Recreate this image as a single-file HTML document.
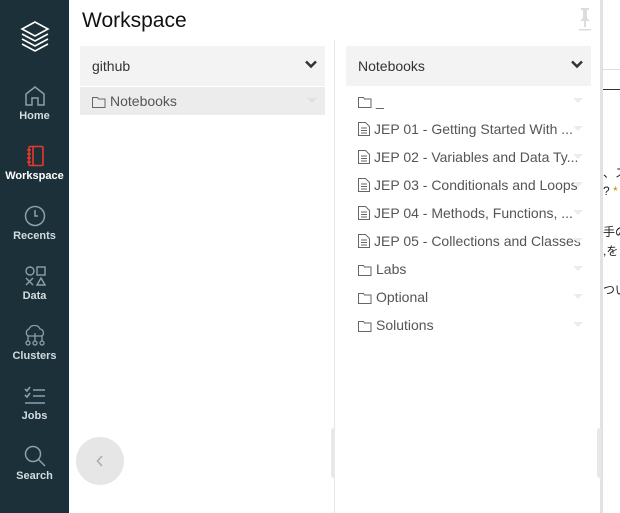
<!DOCTYPE html>
<html><head><meta charset="utf-8"><style>
*{margin:0;padding:0;box-sizing:border-box}
body{width:620px;height:513px;overflow:hidden;background:#fff;font-family:"Liberation Sans","Noto Sans CJK JP",sans-serif;position:relative}
.sb{position:absolute;left:0;top:0;width:69px;height:513px;background:#1c3039}
.it{position:absolute;left:0;width:69px;text-align:center;font-size:11px;font-weight:bold;color:#d2dbe0}
.it svg{display:block;margin:0 auto}
.abs{position:absolute}
.hdr{position:absolute;top:46px;height:40px;background:#f3f3f3;font-size:14px;color:#333;padding:12px 0 0 12px}
.row{position:absolute;height:28px;font-size:14px;color:#555;padding-left:12px;line-height:28px;white-space:nowrap}
.row svg{vertical-align:-2px;margin-right:4px}
.caret{position:absolute;right:8px;top:11px;width:0;height:0;border-left:5px solid transparent;border-right:5px solid transparent;border-top:5px solid #ececec}
.chev{position:absolute;right:8px;top:14px}
.jp{position:absolute;left:603px;font-size:12px;color:#222;white-space:nowrap}
</style></head><body>
<div class="jp" style="top:164px">、ス</div>
<div class="jp" style="top:184px">? <span style="color:#c80">*</span></div>
<div class="jp" style="top:223px">手の</div>
<div class="jp" style="top:242px">,を</div>
<div class="jp" style="top:281px">つい</div>
<div class="abs" style="left:603px;top:69px;width:17px;height:1px;background:#ddd"></div>
<div class="abs" style="left:603px;top:89px;width:17px;height:1px;background:#333"></div>

<div class="sb">
 <div class="it" style="top:19px"><svg width="32" height="34" viewBox="0 0 32 34" fill="none" stroke="#fff" stroke-width="1.6"><path d="M16 3L3 10l13 7 13-7z"/><path d="M3 15l13 7 13-7"/><path d="M3 20l13 7 13-7"/><path d="M3 25l13 7 13-7"/></svg></div>
 <div class="it" style="top:85px"><svg width="22" height="22" viewBox="0 0 22 22" fill="none" stroke="#8aa0ab" stroke-width="1.5"><path d="M2 20V9L11 2l9 7v11h-6v-7H8v7z"/></svg><div style="margin-top:3px">Home</div></div>
 <div class="it" style="top:145px;color:#fff"><svg width="22" height="22" viewBox="0 0 22 22" fill="none" stroke="#e8382a" stroke-width="1.6"><rect x="5" y="1.5" width="14" height="19" rx="1"/><path d="M3 5h4M3 9h4M3 13h4M3 17h4M9 2v18"/></svg><div style="margin-top:3px">Workspace</div></div>
 <div class="it" style="top:205px"><svg width="22" height="22" viewBox="0 0 22 22" fill="none" stroke="#8aa0ab" stroke-width="1.5"><circle cx="11" cy="11" r="9.5"/><path d="M11 5v6h3"/></svg><div style="margin-top:3px">Recents</div></div>
 <div class="it" style="top:265px"><svg width="22" height="22" viewBox="0 0 22 22" fill="none" stroke="#8aa0ab" stroke-width="1.4"><circle cx="6" cy="6" r="4"/><rect x="13" y="2" width="8" height="8"/><path d="M2 13l7 7M9 13l-7 7M17 13l4 7h-8z"/></svg><div style="margin-top:3px">Data</div></div>
 <div class="it" style="top:325px"><svg width="24" height="22" viewBox="0 0 24 22" fill="none" stroke="#8aa0ab" stroke-width="1.3"><path d="M5 11a4 4 0 0 1 1-7 6 6 0 0 1 11 0 4 4 0 0 1 2 7z"/><path d="M12 8v8M5 11v5M19 11v5"/><circle cx="5" cy="18" r="2"/><circle cx="12" cy="18" r="2"/><circle cx="19" cy="18" r="2"/></svg><div style="margin-top:3px">Clusters</div></div>
 <div class="it" style="top:385px"><svg width="24" height="22" viewBox="0 0 24 22" fill="none" stroke="#8aa0ab" stroke-width="1.6"><path d="M2 4l2 2 3-4M2 10l2 2 3-4M10 5h12M10 11h12M2 18h20"/></svg><div style="margin-top:3px">Jobs</div></div>
 <div class="it" style="top:445px"><svg width="22" height="22" viewBox="0 0 22 22" fill="none" stroke="#8aa0ab" stroke-width="1.5"><circle cx="9" cy="9" r="7.5"/><path d="M14.5 14.5L21 21"/></svg><div style="margin-top:3px">Search</div></div>
</div>

<div class="abs" style="left:82px;top:9px;font-size:21px;color:#111">Workspace</div>
<svg class="abs" style="left:578px;top:7px" width="14" height="24" viewBox="0 0 14 24" fill="#dcdcdc"><rect x="3" y="1" width="8" height="2"/><rect x="5" y="3" width="4" height="8"/><path d="M2 14l3-3h4l3 3z"/><rect x="6" y="14" width="2" height="6"/><rect x="1" y="22" width="12" height="1.5"/></svg>
<div class="abs" style="left:600px;top:0;width:3px;height:513px;background:#e2e2e2"></div>
<div class="abs" style="left:334px;top:40px;width:1px;height:473px;background:#e6e6e6"></div>
<div class="abs" style="left:331px;top:428px;width:4px;height:50px;background:#e8e8e8;border-radius:3px 0 0 3px"></div>
<div class="abs" style="left:597px;top:428px;width:4px;height:50px;background:#e8e8e8;border-radius:3px 0 0 3px"></div>

<div class="hdr" style="left:80px;width:245px">github<svg class="chev" width="12" height="9" viewBox="0 0 12 9"><path d="M1 1.5l5 5 5-5" fill="none" stroke="#333" stroke-width="2.5"/></svg></div>
<div class="row" style="left:80px;top:87px;width:245px;background:#ececec"><svg width="14" height="12" viewBox="0 0 14 12" fill="none" stroke="#666"><path d="M.5 1.5h5l1 1.5h6.5v8.5H.5z"/></svg>Notebooks<div class="caret" style="border-top-color:#e0e0e0"></div></div>

<div class="hdr" style="left:346px;width:245px">Notebooks<svg class="chev" width="12" height="9" viewBox="0 0 12 9"><path d="M1 1.5l5 5 5-5" fill="none" stroke="#333" stroke-width="2.5"/></svg></div>
<div id="rows"></div>
<script>
var items=[["f","_"],["d","JEP 01 - Getting Started With ..."],["d","JEP 02 - Variables and Data Ty..."],["d","JEP 03 - Conditionals and Loops"],["d","JEP 04 - Methods, Functions, ..."],["d","JEP 05 - Collections and Classes"],["f","Labs"],["f","Optional"],["f","Solutions"]];
var h="";
items.forEach(function(it,i){
var ic=it[0]=="f"?'<svg width="14" height="12" viewBox="0 0 14 12" fill="none" stroke="#666"><path d="M.5 1.5h5l1 1.5h6.5v8.5H.5z"/></svg>':'<svg width="12" height="14" viewBox="0 0 12 14" fill="none" stroke="#666"><path d="M.5.5h7l4 4v9H.5z"/><path d="M3 6h6M3 8.5h6M3 11h6"/></svg>';
h+='<div class="row" style="left:346px;top:'+(87+i*28)+'px;width:245px">'+ic+it[1]+'<div class="caret"></div></div>';});
document.getElementById("rows").innerHTML=h;
</script>
<div class="abs" style="left:76px;top:437px;width:48px;height:48px;border-radius:50%;background:#e6e6e6"></div>
<svg class="abs" style="left:96px;top:455px" width="8" height="12" viewBox="0 0 8 12"><path d="M6 1L1.5 6 6 11" fill="none" stroke="#aaa" stroke-width="1.5"/></svg>
</body></html>
